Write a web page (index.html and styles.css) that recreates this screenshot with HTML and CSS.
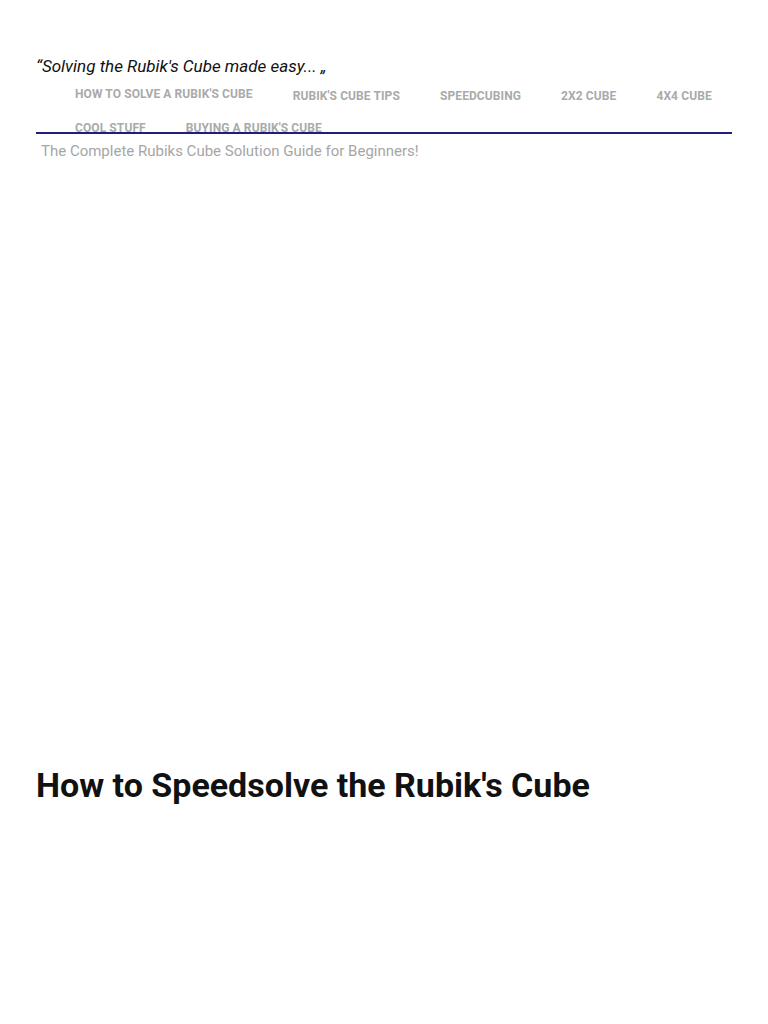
FILE: index.html
```html
<!DOCTYPE html>
<html lang="en">
<head>
<meta charset="utf-8">
<title>How to Speedsolve the Rubik's Cube</title>
<link rel="stylesheet" href="styles.css">
</head>
<body>
<header class="header">
  <p class="tagline">“Solving the Rubik's Cube made easy... „</p>
  <nav class="nav">
    <a class="nav-item nav-item-first" href="#">How to solve a Rubik's Cube</a>
    <a class="nav-item" href="#">Rubik's Cube Tips</a>
    <a class="nav-item" href="#">Speedcubing</a>
    <a class="nav-item" href="#">2x2 Cube</a>
    <a class="nav-item" href="#">4x4 Cube</a>
    <a class="nav-item" href="#">Cool Stuff</a>
    <a class="nav-item" href="#">Buying a Rubik's Cube</a>
  </nav>
  <p class="subtitle">The Complete Rubiks Cube Solution Guide for Beginners!</p>
</header>
<main class="main">
  <div class="hero-space"></div>
  <h1 class="title">How to Speedsolve the Rubik's Cube</h1>
</main>
</body>
</html>
```

FILE: styles.css
```css
html, body {
  margin: 0;
  padding: 0;
  background: #ffffff;
}
body {
  font-family: Roboto, "Liberation Sans", Arial, sans-serif;
  color: #111111;
}
.header {
  padding: 0 36px;
}
.tagline {
  margin: 0;
  padding-top: 56px;
  font-size: 17px;
  line-height: 20px;
  font-style: italic;
  color: #111111;
}
.nav {
  display: flex;
  flex-wrap: wrap;
  column-gap: 40px;
  row-gap: 20px;
  padding: 12px 0 0 39px;
  border-bottom: 2px solid #1f1f7a;
}
.nav-item {
  font-size: 12px;
  line-height: 12px;
  font-weight: 700;
  letter-spacing: 0.1px;
  text-transform: uppercase;
  color: #aaaaaa;
  text-decoration: none;
  padding-top: 2px;
  margin-bottom: -2px;
}
.nav-item-first {
  padding-top: 0;
  margin-bottom: 0;
}
.subtitle {
  margin: 7px 0 0;
  padding-left: 5px;
  font-size: 15px;
  line-height: 20px;
  color: #a6a6a6;
}
.main {
  padding: 0 36px;
}
.hero-space {
  height: 604px;
}
.title {
  margin: 0;
  font-size: 34px;
  line-height: 40px;
  font-weight: 700;
  color: #111111;
}
```
